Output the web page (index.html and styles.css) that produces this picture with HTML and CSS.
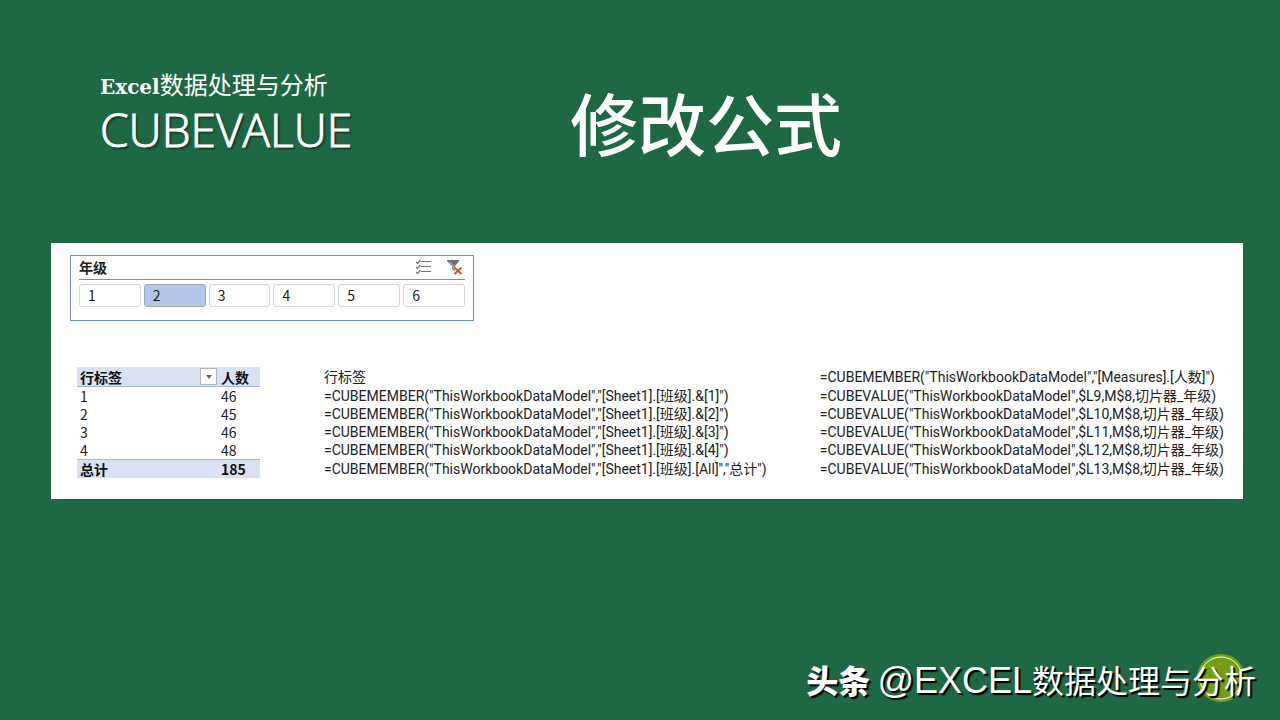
FILE: index.html
```html
<!DOCTYPE html>
<html lang="zh-CN">
<head>
    <meta charset="UTF-8">
    <meta name="viewport" content="width=device-width, initial-scale=1.0">
    <title>CUBEVALUE - 修改公式</title>
    <link rel="stylesheet" href="styles.css">
</head>
<body>
    <header class="header">
        <div class="course">
            <p class="series"><span class="series-latin">Excel</span>数据处理与分析</p>
            <p class="function-name">CUBEVALUE</p>
        </div>
        <h1 class="title">修改公式</h1>
    </header>

    <main class="sheet">
        <section class="slicer" aria-labelledby="slicer-title">
            <div class="slicer-header">
                <h2 class="slicer-title" id="slicer-title">年级</h2>
                <button class="icon-btn" type="button" aria-label="多选">
                    <svg width="16" height="16" viewBox="0 0 16 16" fill="none" stroke="#777">
                        <path d="M0 3l1.500 1.500L4.500 1M0 8l1.500 1.500L4.500 6M0 13l1.500 1.500L4.500 11" stroke-width="1.200"/>
                        <path d="M5 2.500h10M5 7.500h10M5 12.500h10"/>
                    </svg>
                </button>
                <button class="icon-btn" type="button" aria-label="清除筛选器">
                    <svg width="16" height="16" viewBox="0 0 16 16">
                        <path d="M0 1h12v1L8 7v5L5 10V7L0 2z" fill="#707070"/>
                        <path d="M2.500 2.500L6 6.500v3" fill="none" stroke="#c4c4c4"/>
                        <path d="M7.500 8.500l7 6.500M14.500 8.500L7.500 15" stroke="#fff" stroke-width="3"/>
                        <path d="M7.500 8.500l7 6.500M14.500 8.500L7.500 15" stroke="#d9492b" stroke-width="1.800"/>
                    </svg>
                </button>
            </div>
            <div class="slicer-items">
                <button class="slicer-item" type="button">1</button>
                <button class="slicer-item selected" type="button" aria-pressed="true">2</button>
                <button class="slicer-item" type="button">3</button>
                <button class="slicer-item" type="button">4</button>
                <button class="slicer-item" type="button">5</button>
                <button class="slicer-item" type="button">6</button>
            </div>
        </section>

        <div class="tables">
            <table class="pivot">
                <thead>
                    <tr>
                        <th class="label-col">
                            <div class="label-head">
                                行标签
                                <button class="filter-btn" type="button" aria-label="筛选行标签">
                                    <svg width="6" height="4" viewBox="0 0 6 4"><path d="M0 0h6L3 4z" fill="#666"/></svg>
                                </button>
                            </div>
                        </th>
                        <th>人数</th>
                    </tr>
                </thead>
                <tbody>
                    <tr><td>1</td><td>46</td></tr>
                    <tr><td>2</td><td>45</td></tr>
                    <tr><td>3</td><td>46</td></tr>
                    <tr><td>4</td><td>48</td></tr>
                </tbody>
                <tfoot>
                    <tr><th>总计</th><th>185</th></tr>
                </tfoot>
            </table>

            <table class="formulas">
                <thead>
                    <tr><td class="member-col">行标签</td><td>=CUBEMEMBER("ThisWorkbookDataModel","[Measures].[人数]")</td></tr>
                </thead>
                <tbody>
                    <tr><td>=CUBEMEMBER("ThisWorkbookDataModel","[Sheet1].[班级].&amp;[1]")</td><td>=CUBEVALUE("ThisWorkbookDataModel",$L9,M$8,切片器_年级)</td></tr>
                    <tr><td>=CUBEMEMBER("ThisWorkbookDataModel","[Sheet1].[班级].&amp;[2]")</td><td>=CUBEVALUE("ThisWorkbookDataModel",$L10,M$8,切片器_年级)</td></tr>
                    <tr><td>=CUBEMEMBER("ThisWorkbookDataModel","[Sheet1].[班级].&amp;[3]")</td><td>=CUBEVALUE("ThisWorkbookDataModel",$L11,M$8,切片器_年级)</td></tr>
                    <tr><td>=CUBEMEMBER("ThisWorkbookDataModel","[Sheet1].[班级].&amp;[4]")</td><td>=CUBEVALUE("ThisWorkbookDataModel",$L12,M$8,切片器_年级)</td></tr>
                </tbody>
                <tfoot>
                    <tr><td>=CUBEMEMBER("ThisWorkbookDataModel","[Sheet1].[班级].[All]","总计")</td><td>=CUBEVALUE("ThisWorkbookDataModel",$L13,M$8,切片器_年级)</td></tr>
                </tfoot>
            </table>
        </div>
    </main>

    <footer class="footer">
        <svg class="badge" width="48" height="48" viewBox="0 0 48 48">
            <circle cx="24" cy="24" r="24" fill="#73a012"/>
            <circle cx="24" cy="24" r="21" fill="none" stroke="#fff"/>
            <circle cx="13" cy="12" r="1" fill="#91b53e"/>
            <circle cx="23" cy="10" r="1" fill="#91b53e"/>
            <circle cx="32" cy="37" r="1" fill="#91b53e"/>
        </svg>
        <p class="watermark"><b class="brand">头条</b> <span class="account">@EXCEL</span>数据处理与分析</p>
    </footer>
</body>
</html>
```
FILE: styles.css
```css
* {
    box-sizing: border-box;
}
body {
    margin: 0;
    min-height: 100vh;
    display: flex;
    flex-direction: column;
    background-color: #1e6843;
    color: #222;
    font-family: "Noto Sans CJK SC", sans-serif;
    font-size: 14px;
}
p, h1, h2 {
    margin: 0;
    font-weight: normal;
}
button {
    font: inherit;
    color: inherit;
    cursor: pointer;
}
.header {
    display: flex;
    gap: 218px;
    padding: 68px 100px 0;
    min-height: 243px;
    color: #fff;
}
.course {
    width: 252px;
}
.series {
    font-size: 24px;
    line-height: 32px;
    white-space: nowrap;
}
.series-latin {
    font-family: "DejaVu Serif", serif;
    font-size: 20px;
    font-weight: bold;
}
.function-name {
    font-family: "Open Sans", sans-serif;
    font-weight: 300;
    font-size: 46px;
    line-height: 52px;
    -webkit-text-stroke: 1px #fff;
    text-shadow: 2px 2px 2px rgba(0, 0, 0, 0.5);
}
.title {
    font-size: 68px;
    line-height: 108px;
    font-weight: 500;
    white-space: nowrap;
}
.sheet {
    margin: 0 37px 0 51px;
    padding: 12px 19px 21px;
    background-color: #fff;
}
.slicer {
    width: 404px;
    height: 66px;
    padding: 0 8px;
    border: 1px solid #6b8fd0;
}
.slicer-header {
    display: flex;
    align-items: center;
    gap: 15px;
    height: 24px;
    padding: 0 2px 2px 0;
    border-bottom: 1px solid #6b8fd0;
}
.slicer-title {
    flex: 1;
    font-size: 14px;
    font-weight: bold;
}
.icon-btn {
    width: 16px;
    height: 16px;
    padding: 0;
    border: none;
    background: none;
}
.icon-btn svg {
    display: block;
}
.slicer-items {
    display: grid;
    grid-template-columns: repeat(6, 1fr);
    gap: 3px;
    padding-top: 4px;
}
.slicer-item {
    height: 23px;
    padding: 0 8px 2px;
    border: 1px solid #d6d6d6;
    border-radius: 3px;
    background-color: #fff;
    line-height: 18px;
    text-align: left;
}
.slicer-item.selected {
    background-color: #b4c6e7;
    border-color: #9da8bd;
}
.tables {
    display: flex;
    gap: 64px;
    margin-top: 46px;
    padding-left: 7px;
}
table {
    border-collapse: separate;
    border-spacing: 0;
    line-height: 18px;
    text-align: left;
    white-space: nowrap;
}
th, td {
    height: 18px;
    padding: 0;
}
thead th, thead td {
    height: 20px;
}
tfoot th, tfoot td {
    height: 19px;
}
.pivot {
    flex: none;
    width: 183px;
}
.pivot th {
    background-color: #d9e1f2;
    color: #111;
}
.pivot thead th {
    border-bottom: 1px solid #9db8e3;
}
.pivot tfoot th {
    border-top: 1px solid #9db8e3;
}
.pivot th:first-child, .pivot td:first-child {
    padding-left: 3px;
}
.label-col {
    width: 144px;
}
.label-head {
    display: flex;
    align-items: center;
    justify-content: space-between;
    padding-right: 4px;
}
.filter-btn {
    display: flex;
    align-items: center;
    justify-content: center;
    width: 17px;
    height: 17px;
    padding: 0;
    border: 1px solid #b5b5b5;
    background-color: #fff;
}
.formulas {
    font-family: Roboto, "Noto Sans CJK SC", sans-serif;
}
.member-col {
    width: 496px;
}
.footer {
    display: flex;
    justify-content: flex-end;
    position: relative;
    margin-top: auto;
    padding: 0 24px 15px;
}
.badge {
    position: absolute;
    right: 35px;
    bottom: 18px;
}
.watermark {
    position: relative;
    color: #fff;
    font-size: 32px;
    line-height: 48px;
    white-space: nowrap;
    text-shadow: 2px 2px 1px #000;
}
.brand {
    font-weight: 900;
}
.account {
    font-family: "Liberation Sans", sans-serif;
    font-size: 36px;
}
```
